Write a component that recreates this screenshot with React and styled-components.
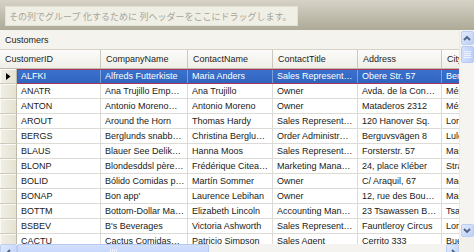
import React from "react";
import styled, { createGlobalStyle } from "styled-components";

const Global = createGlobalStyle`
  html, body { margin: 0; padding: 0; background: #ffffff; }
  body { font-family: "Liberation Sans", Arial, sans-serif; }
`;

const COLS = [84, 87, 85, 85, 84, 90];
const HEADERS = ["CustomerID", "CompanyName", "ContactName", "ContactTitle", "Address", "City"];
const ROWS = [
  ["ALFKI", "Alfreds Futterkiste", "Maria Anders", "Sales Represent…", "Obere Str. 57", "Berlin"],
  ["ANATR", "Ana Trujillo Emp…", "Ana Trujillo", "Owner", "Avda. de la Con…", "México D.F."],
  ["ANTON", "Antonio Moreno…", "Antonio Moreno", "Owner", "Mataderos  2312", "México D.F."],
  ["AROUT", "Around the Horn", "Thomas Hardy", "Sales Represent…", "120 Hanover Sq.", "London"],
  ["BERGS", "Berglunds snabb…", "Christina Berglu…", "Order Administr…", "Berguvsvägen  8", "Luleå"],
  ["BLAUS", "Blauer See Delik…", "Hanna Moos", "Sales Represent…", "Forsterstr. 57", "Mannheim"],
  ["BLONP", "Blondesddsl père…", "Frédérique Citea…", "Marketing Mana…", "24, place Kléber", "Strasbourg"],
  ["BOLID", "Bólido Comidas p…", "Martín Sommer", "Owner", "C/ Araquil, 67", "Madrid"],
  ["BONAP", "Bon app'", "Laurence Lebihan", "Owner", "12, rue des Bou…", "Marseille"],
  ["BOTTM", "Bottom-Dollar Ma…", "Elizabeth Lincoln", "Accounting Man…", "23 Tsawassen B…", "Tsawassen"],
  ["BSBEV", "B's Beverages", "Victoria Ashworth", "Sales Represent…", "Fauntleroy Circus", "London"],
  ["CACTU", "Cactus Comidas…", "Patricio Simpson", "Sales Agent", "Cerrito 333", "Buenos Aires"],
];

const Window = styled.div`
  width: 474px;
  height: 252px;
  overflow: hidden;
  display: flex;
  flex-direction: column;
  background: #f3f2ec;
`;

const GroupBar = styled.div`
  flex: none;
  height: 30px;
  box-sizing: border-box;
  padding: 6px 5px 0;
  background: linear-gradient(#d6d3c6, #aeaa98);
`;

const DropHint = styled.div`
  width: 293px;
  height: 20px;
  box-sizing: border-box;
  padding-left: 3px;
  display: flex;
  align-items: center;
  white-space: nowrap;
  background: #f0efe6;
  border: 1px solid #e4e2d6;
  color: #a6a498;
  font-family: "Liberation Sans", "Noto Sans CJK JP", sans-serif;
  font-size: 9px;
`;

const Main = styled.div`
  flex: none;
  height: 240px;
  display: flex;
`;

const GridColumn = styled.div`
  width: 459px;
  flex: none;
  display: flex;
  flex-direction: column;
  overflow: hidden;
`;

const Caption = styled.div`
  flex: none;
  height: 20px;
  box-sizing: border-box;
  padding-left: 5px;
  display: flex;
  align-items: center;
  background: #f4f3ee;
  border-bottom: 1px solid #d6d3c6;
  color: #1c1c1c;
  font-size: 9px;
`;

const HeaderRow = styled.div`
  flex: none;
  height: 19px;
  display: grid;
  grid-template-columns: ${17 + COLS[0]}px ${COLS.slice(1).map((c) => c + "px").join(" ")};
`;

const HeaderCell = styled.div`
  box-sizing: border-box;
  padding-left: 5px;
  display: flex;
  align-items: center;
  white-space: nowrap;
  overflow: hidden;
  background: linear-gradient(#fcfcfa, #efeee8);
  border-right: 1px solid #cbc9bd;
  border-bottom: 1px solid #bfbcad;
  color: #1c1c1c;
  font-size: 9px;
`;

const Body = styled.div`
  flex: none;
  height: 175px;
  overflow: hidden;
  background: #ffffff;
`;

const Row = styled.div`
  height: 15px;
  display: flex;
`;

const RowSelector = styled.div`
  flex: none;
  width: 17px;
  box-sizing: border-box;
  display: flex;
  align-items: center;
  padding-left: 6px;
  background: linear-gradient(90deg, #f1efe4, #e6e3d3);
  border-right: 1px solid #bdbaa9;
  border-bottom: 1px solid #cdcaba;
  box-shadow: inset 1px 1px 0 #fbfaf6;
`;

const CellStrip = styled.div`
  flex: none;
  display: grid;
  grid-template-columns: ${COLS.map((c) => c + "px").join(" ")};
  background: ${(p) => (p.$selected ? "linear-gradient(#3b73cf, #2f63bd)" : "#ffffff")};
  color: ${(p) => (p.$selected ? "#ffffff" : "#1a1a1a")};
  outline: ${(p) => (p.$selected ? "1px solid #a8365c" : "none")};
  outline-offset: -1px;
`;

const Cell = styled.div`
  box-sizing: border-box;
  padding-left: 4px;
  display: flex;
  align-items: center;
  white-space: nowrap;
  overflow: hidden;
  font-size: 9px;
  border-right: 1px solid ${(p) => (p.$selected ? "rgba(255,255,255,0.35)" : "#dcdbd6")};
  border-bottom: 1px solid ${(p) => (p.$selected ? "transparent" : "#dcdbd6")};
`;

const HScroll = styled.div`
  flex: none;
  height: 17px;
  display: flex;
  background: #f4f3ef;
`;

const VColumn = styled.div`
  flex: 1;
  display: flex;
  flex-direction: column;
  padding-top: 1px;
  background: #f3f2ec;
`;

const VScroll = styled.div`
  height: 206px;
  flex: none;
  display: flex;
  flex-direction: column;
  align-items: center;
  background: #f5f4f0;
  border-left: 1px solid #ebeae3;
`;

const Track = styled.div`
  flex: 1;
`;

const ScrollButton = styled.div`
  flex: none;
  width: ${(p) => p.$w}px;
  height: ${(p) => p.$h}px;
  box-sizing: border-box;
  display: flex;
  align-items: center;
  justify-content: center;
  border: 1px solid #bccdf2;
  border-radius: 2px;
  background: linear-gradient(135deg, #e1eafd, #bccff8);
`;

const Thumb = styled.div`
  flex: none;
  width: ${(p) => (p.$w ? p.$w + "px" : "13px")};
  height: ${(p) => (p.$h ? p.$h + "px" : "17px")};
  margin: ${(p) => p.$m || "0"};
  box-sizing: border-box;
  display: flex;
  align-items: center;
  justify-content: center;
  border: 1px solid #b6c9f2;
  border-radius: 2px;
  background: ${(p) =>
    p.$horizontal
      ? "linear-gradient(#d3e0fd, #bccff9)"
      : "linear-gradient(90deg, #d3e0fd, #bccff9)"};
`;

const Corner = styled.div`
  flex: 1;
  background: #f1f0ea;
`;

const Chevron = ({ dir }) => {
  const pts = {
    up: "2,6 5,3 8,6",
    down: "2,3 5,6 8,3",
    left: "6,2 3,5 6,8",
    right: "4,2 7,5 4,8",
  }[dir];
  return (
    <svg width="10" height="9" viewBox="0 0 10 9">
      <polyline points={pts} fill="none" stroke="#4d6185" strokeWidth="1.8" />
    </svg>
  );
};

const Grip = ({ horizontal }) =>
  horizontal ? (
    <svg width="7" height="6" viewBox="0 0 7 6">
      {[0, 2, 4, 6].map((x) => (
        <line key={x} x1={x + 0.5} y1="0" x2={x + 0.5} y2="6" stroke="#eef3fe" strokeWidth="1" />
      ))}
    </svg>
  ) : (
    <svg width="7" height="7" viewBox="0 0 7 7">
      {[0, 2, 4, 6].map((y) => (
        <line key={y} x1="0" y1={y + 0.5} x2="7" y2={y + 0.5} stroke="#eef3fe" strokeWidth="1" />
      ))}
    </svg>
  );

const Indicator = () => (
  <svg width="5" height="7" viewBox="0 0 5 7">
    <polygon points="0,0 4.5,3.5 0,7" fill="#000" />
  </svg>
);

export default function App() {
  return (
    <>
      <Global />
      <Window>
        <GroupBar>
          <DropHint>その列でグループ 化するために 列ヘッダーをここにドラッグします。</DropHint>
        </GroupBar>
        <Main>
          <GridColumn>
            <Caption>Customers</Caption>
            <HeaderRow>
              {HEADERS.map((h) => (
                <HeaderCell key={h}>{h}</HeaderCell>
              ))}
            </HeaderRow>
            <Body>
              {ROWS.map((r, i) => (
                <Row key={r[0]}>
                  <RowSelector>{i === 0 && <Indicator />}</RowSelector>
                  <CellStrip $selected={i === 0}>
                    {r.map((v, j) => (
                      <Cell key={j} $selected={i === 0}>
                        {v}
                      </Cell>
                    ))}
                  </CellStrip>
                </Row>
              ))}
            </Body>
            <HScroll>
              <ScrollButton $w={17} $h={16}>
                <Chevron dir="left" />
              </ScrollButton>
              <Thumb $horizontal $w={192} $h={16}>
                <Grip horizontal />
              </Thumb>
              <Track />
              <ScrollButton $w={13} $h={16}>
                <Chevron dir="right" />
              </ScrollButton>
            </HScroll>
          </GridColumn>
          <VColumn>
            <VScroll>
              <ScrollButton $w={13} $h={14}>
                <Chevron dir="up" />
              </ScrollButton>
              <Thumb $m="1px 0 0">
                <Grip />
              </Thumb>
              <Track />
              <ScrollButton $w={13} $h={13}>
                <Chevron dir="down" />
              </ScrollButton>
            </VScroll>
            <Corner />
          </VColumn>
        </Main>
      </Window>
    </>
  );
}
